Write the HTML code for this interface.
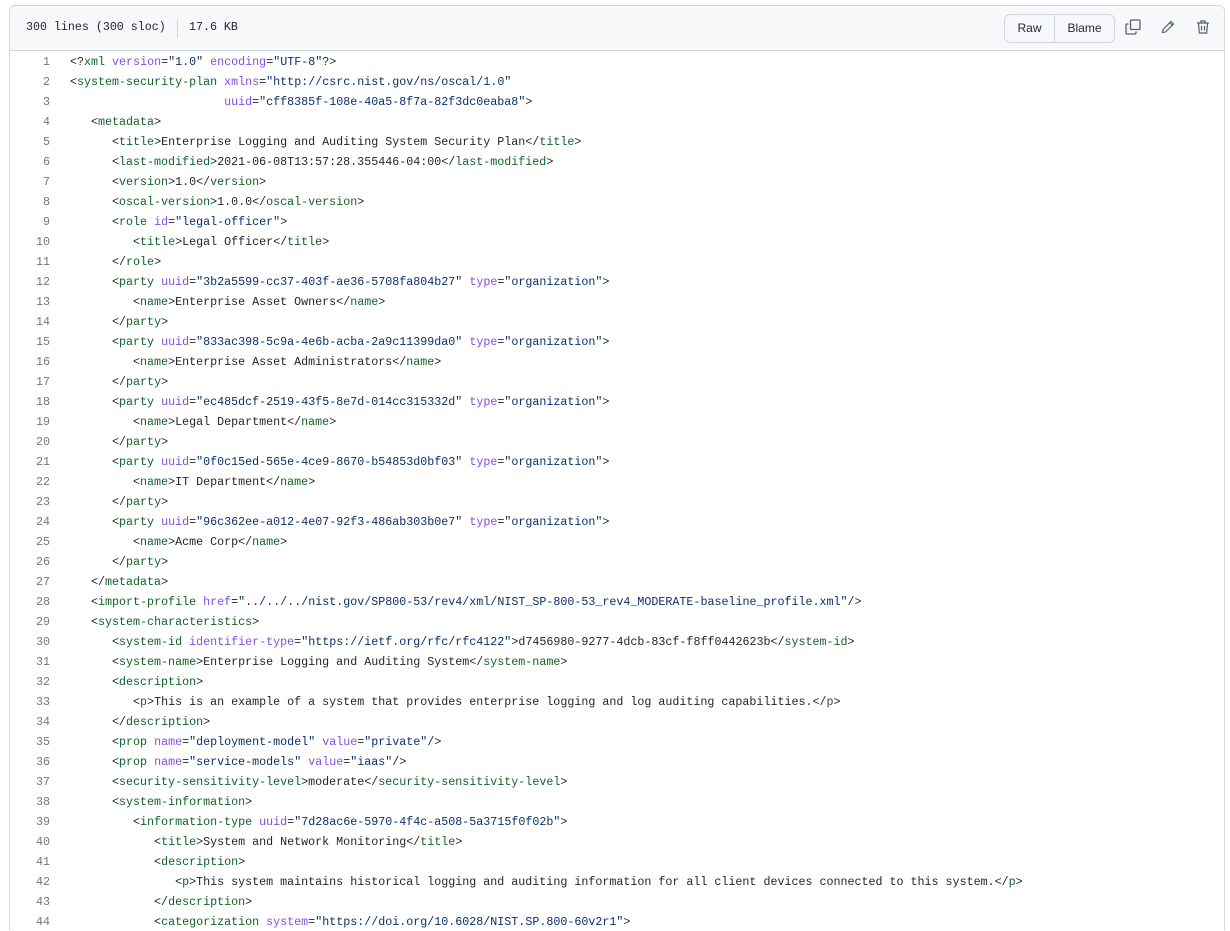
<!DOCTYPE html>
<html><head><meta charset="utf-8"><style>
html,body{margin:0;padding:0;background:#fff;width:1230px;height:931px;overflow:hidden}
.box{position:absolute;left:9px;top:5px;width:1214px;height:924px;border:1px solid #d0d7de;border-bottom:none;border-radius:6px 6px 0 0;overflow:hidden}
.hd{height:44px;background:#f6f8fa;border-bottom:1px solid #d0d7de;position:relative;font-family:"Liberation Mono",monospace;font-size:11.65px;color:#1f2328}
.hd .l{position:absolute;left:16px;top:15px}
.hd .sep{position:absolute;left:167px;top:13px;width:1px;height:19px;background:#d0d7de}
.hd .r{position:absolute;left:179px;top:15px}
.btns{position:absolute;left:994px;top:8px;height:27px;border:1px solid #d0d7de;border-radius:6px;background:#f6f8fa;display:flex;font-family:"Liberation Sans",sans-serif;font-size:12px;color:#24292f}
.btns div{padding:0 12.5px;line-height:27px}
.btns div+div{border-left:1px solid #d0d7de}
.ic{position:absolute;top:13px}
.code{font-family:"Liberation Mono",monospace;font-size:11.68px;color:#1f2328;padding-top:1px}
.ln{height:20px;line-height:20px;white-space:pre;position:relative}
.n{position:absolute;left:0;width:40px;text-align:right;color:#6e7781}
.c{position:absolute;left:60px}
.t{color:#116329}.a{color:#8250df}.s{color:#0a3069}
</style></head><body>
<div class="box">
<div class="hd"><span class="l">300 lines (300 sloc)</span><span class="sep"></span><span class="r">17.6 KB</span>
<div class="btns"><div>Raw</div><div>Blame</div></div>
<svg class="ic" style="left:1115px" width="16" height="16" viewBox="0 0 16 16" fill="none" stroke="#57606a" stroke-width="1.3"><rect x="5.5" y="1" width="9.5" height="9.5" rx="1"/><path d="M3.5 5H2a1 1 0 0 0-1 1v8a1 1 0 0 0 1 1h8a1 1 0 0 0 1-1v-1.5"/></svg>
<svg class="ic" style="left:1150px" width="16" height="16" viewBox="0 0 16 16" fill="none" stroke="#57606a" stroke-width="1.2"><path d="M11 2.5l2.5 2.5L5.5 13 2.5 13.5 3 10.5z M9.8 3.7l2.5 2.5"/></svg>
<svg class="ic" style="left:1185px" width="16" height="16" viewBox="0 0 16 16" fill="none" stroke="#57606a" stroke-width="1.2"><path d="M2 4h12M6 4V2h4v2M3.5 4l.8 10h7.4l.8-10M6.5 7v4.5M9.5 7v4.5"/></svg>
</div>
<div class="code">
<div class="ln"><span class="n">1</span><span class="c">&lt;?<span class="t">xml</span> <span class="a">version</span>=<span class="s">"1.0"</span> <span class="a">encoding</span>=<span class="s">"UTF-8"</span>?&gt;</span></div>
<div class="ln"><span class="n">2</span><span class="c">&lt;<span class="t">system-security-plan</span> <span class="a">xmlns</span>=<span class="s">"http://csrc.nist.gov/ns/oscal/1.0"</span></span></div>
<div class="ln"><span class="n">3</span><span class="c">                      <span class="a">uuid</span>=<span class="s">"cff8385f-108e-40a5-8f7a-82f3dc0eaba8"</span>&gt;</span></div>
<div class="ln"><span class="n">4</span><span class="c">   &lt;<span class="t">metadata</span>&gt;</span></div>
<div class="ln"><span class="n">5</span><span class="c">      &lt;<span class="t">title</span>&gt;Enterprise Logging and Auditing System Security Plan&lt;/<span class="t">title</span>&gt;</span></div>
<div class="ln"><span class="n">6</span><span class="c">      &lt;<span class="t">last-modified</span>&gt;2021-06-08T13:57:28.355446-04:00&lt;/<span class="t">last-modified</span>&gt;</span></div>
<div class="ln"><span class="n">7</span><span class="c">      &lt;<span class="t">version</span>&gt;1.0&lt;/<span class="t">version</span>&gt;</span></div>
<div class="ln"><span class="n">8</span><span class="c">      &lt;<span class="t">oscal-version</span>&gt;1.0.0&lt;/<span class="t">oscal-version</span>&gt;</span></div>
<div class="ln"><span class="n">9</span><span class="c">      &lt;<span class="t">role</span> <span class="a">id</span>=<span class="s">"legal-officer"</span>&gt;</span></div>
<div class="ln"><span class="n">10</span><span class="c">         &lt;<span class="t">title</span>&gt;Legal Officer&lt;/<span class="t">title</span>&gt;</span></div>
<div class="ln"><span class="n">11</span><span class="c">      &lt;/<span class="t">role</span>&gt;</span></div>
<div class="ln"><span class="n">12</span><span class="c">      &lt;<span class="t">party</span> <span class="a">uuid</span>=<span class="s">"3b2a5599-cc37-403f-ae36-5708fa804b27"</span> <span class="a">type</span>=<span class="s">"organization"</span>&gt;</span></div>
<div class="ln"><span class="n">13</span><span class="c">         &lt;<span class="t">name</span>&gt;Enterprise Asset Owners&lt;/<span class="t">name</span>&gt;</span></div>
<div class="ln"><span class="n">14</span><span class="c">      &lt;/<span class="t">party</span>&gt;</span></div>
<div class="ln"><span class="n">15</span><span class="c">      &lt;<span class="t">party</span> <span class="a">uuid</span>=<span class="s">"833ac398-5c9a-4e6b-acba-2a9c11399da0"</span> <span class="a">type</span>=<span class="s">"organization"</span>&gt;</span></div>
<div class="ln"><span class="n">16</span><span class="c">         &lt;<span class="t">name</span>&gt;Enterprise Asset Administrators&lt;/<span class="t">name</span>&gt;</span></div>
<div class="ln"><span class="n">17</span><span class="c">      &lt;/<span class="t">party</span>&gt;</span></div>
<div class="ln"><span class="n">18</span><span class="c">      &lt;<span class="t">party</span> <span class="a">uuid</span>=<span class="s">"ec485dcf-2519-43f5-8e7d-014cc315332d"</span> <span class="a">type</span>=<span class="s">"organization"</span>&gt;</span></div>
<div class="ln"><span class="n">19</span><span class="c">         &lt;<span class="t">name</span>&gt;Legal Department&lt;/<span class="t">name</span>&gt;</span></div>
<div class="ln"><span class="n">20</span><span class="c">      &lt;/<span class="t">party</span>&gt;</span></div>
<div class="ln"><span class="n">21</span><span class="c">      &lt;<span class="t">party</span> <span class="a">uuid</span>=<span class="s">"0f0c15ed-565e-4ce9-8670-b54853d0bf03"</span> <span class="a">type</span>=<span class="s">"organization"</span>&gt;</span></div>
<div class="ln"><span class="n">22</span><span class="c">         &lt;<span class="t">name</span>&gt;IT Department&lt;/<span class="t">name</span>&gt;</span></div>
<div class="ln"><span class="n">23</span><span class="c">      &lt;/<span class="t">party</span>&gt;</span></div>
<div class="ln"><span class="n">24</span><span class="c">      &lt;<span class="t">party</span> <span class="a">uuid</span>=<span class="s">"96c362ee-a012-4e07-92f3-486ab303b0e7"</span> <span class="a">type</span>=<span class="s">"organization"</span>&gt;</span></div>
<div class="ln"><span class="n">25</span><span class="c">         &lt;<span class="t">name</span>&gt;Acme Corp&lt;/<span class="t">name</span>&gt;</span></div>
<div class="ln"><span class="n">26</span><span class="c">      &lt;/<span class="t">party</span>&gt;</span></div>
<div class="ln"><span class="n">27</span><span class="c">   &lt;/<span class="t">metadata</span>&gt;</span></div>
<div class="ln"><span class="n">28</span><span class="c">   &lt;<span class="t">import-profile</span> <span class="a">href</span>=<span class="s">"../../../nist.gov/SP800-53/rev4/xml/NIST_SP-800-53_rev4_MODERATE-baseline_profile.xml"</span>/&gt;</span></div>
<div class="ln"><span class="n">29</span><span class="c">   &lt;<span class="t">system-characteristics</span>&gt;</span></div>
<div class="ln"><span class="n">30</span><span class="c">      &lt;<span class="t">system-id</span> <span class="a">identifier-type</span>=<span class="s">"https://ietf.org/rfc/rfc4122"</span>&gt;d7456980-9277-4dcb-83cf-f8ff0442623b&lt;/<span class="t">system-id</span>&gt;</span></div>
<div class="ln"><span class="n">31</span><span class="c">      &lt;<span class="t">system-name</span>&gt;Enterprise Logging and Auditing System&lt;/<span class="t">system-name</span>&gt;</span></div>
<div class="ln"><span class="n">32</span><span class="c">      &lt;<span class="t">description</span>&gt;</span></div>
<div class="ln"><span class="n">33</span><span class="c">         &lt;<span class="t">p</span>&gt;This is an example of a system that provides enterprise logging and log auditing capabilities.&lt;/<span class="t">p</span>&gt;</span></div>
<div class="ln"><span class="n">34</span><span class="c">      &lt;/<span class="t">description</span>&gt;</span></div>
<div class="ln"><span class="n">35</span><span class="c">      &lt;<span class="t">prop</span> <span class="a">name</span>=<span class="s">"deployment-model"</span> <span class="a">value</span>=<span class="s">"private"</span>/&gt;</span></div>
<div class="ln"><span class="n">36</span><span class="c">      &lt;<span class="t">prop</span> <span class="a">name</span>=<span class="s">"service-models"</span> <span class="a">value</span>=<span class="s">"iaas"</span>/&gt;</span></div>
<div class="ln"><span class="n">37</span><span class="c">      &lt;<span class="t">security-sensitivity-level</span>&gt;moderate&lt;/<span class="t">security-sensitivity-level</span>&gt;</span></div>
<div class="ln"><span class="n">38</span><span class="c">      &lt;<span class="t">system-information</span>&gt;</span></div>
<div class="ln"><span class="n">39</span><span class="c">         &lt;<span class="t">information-type</span> <span class="a">uuid</span>=<span class="s">"7d28ac6e-5970-4f4c-a508-5a3715f0f02b"</span>&gt;</span></div>
<div class="ln"><span class="n">40</span><span class="c">            &lt;<span class="t">title</span>&gt;System and Network Monitoring&lt;/<span class="t">title</span>&gt;</span></div>
<div class="ln"><span class="n">41</span><span class="c">            &lt;<span class="t">description</span>&gt;</span></div>
<div class="ln"><span class="n">42</span><span class="c">               &lt;<span class="t">p</span>&gt;This system maintains historical logging and auditing information for all client devices connected to this system.&lt;/<span class="t">p</span>&gt;</span></div>
<div class="ln"><span class="n">43</span><span class="c">            &lt;/<span class="t">description</span>&gt;</span></div>
<div class="ln"><span class="n">44</span><span class="c">            &lt;<span class="t">categorization</span> <span class="a">system</span>=<span class="s">"https://doi.org/10.6028/NIST.SP.800-60v2r1"</span>&gt;</span></div>
</div>
</div>
</body></html>
